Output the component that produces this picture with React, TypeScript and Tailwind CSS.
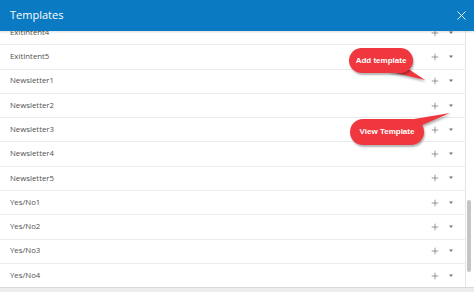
import { Plus, X } from "lucide-react";

const templates = [
  "ExitIntent4",
  "ExitIntent5",
  "Newsletter1",
  "Newsletter2",
  "Newsletter3",
  "Newsletter4",
  "Newsletter5",
  "Yes/No1",
  "Yes/No2",
  "Yes/No3",
  "Yes/No4",
];

function Caret() {
  return (
    <svg width="6" height="4" viewBox="0 0 6 4" className="text-[#777]">
      <path d="M1 0.5 L5 0.5 L3 3 Z" fill="currentColor" />
    </svg>
  );
}

// Red speech bubble used for the annotations
function Callout({ label, tail }: { label: string; tail: "down" | "up" }) {
  return (
    <div className="absolute" style={tail === "down" ? { left: 349, top: 48 } : { left: 350, top: 109 }}>
      <svg
        width="110"
        height="40"
        viewBox="0 0 110 40"
        className="absolute left-0 top-0 overflow-visible drop-shadow-[1px_2px_1px_rgba(0,0,0,0.3)]"
      >
        {tail === "down" ? (
          <path d="M38 23 L76 32 L58 20 Z" fill="#f0373d" />
        ) : (
          <path d="M52 12 L100 4 L70 17 Z" fill="#f0373d" />
        )}
      </svg>
      <div
        className={
          tail === "down"
            ? "relative flex h-[25px] w-[64px] items-center justify-center rounded-full bg-[#f0373d] text-[8px] font-bold text-white shadow-[1px_2px_2px_rgba(0,0,0,0.3)]"
            : "relative mt-[10px] flex h-[26px] w-[74px] items-center justify-center rounded-full bg-[#f0373d] text-[8px] font-bold text-white shadow-[1px_2px_2px_rgba(0,0,0,0.3)]"
        }
        style={{ fontFamily: '"Liberation Sans", Arial, sans-serif' }}
      >
        {label}
      </div>
    </div>
  );
}

export default function App() {
  return (
    <div
      className="relative flex h-[292px] w-[474px] flex-col overflow-hidden bg-white"
      style={{ fontFamily: '"Open Sans", "Noto Sans", sans-serif' }}
    >
      {/* Header */}
      <div className="z-10 flex h-[31px] shrink-0 items-center justify-between bg-[#0a7bc2] pl-[10px] pr-[5px] shadow-[0_1px_2px_rgba(0,0,0,0.15)]">
        <span className="text-[11px] text-white">Templates</span>
        <X size={15} strokeWidth={1.4} className="text-white" />
      </div>

      {/* List + scrollbar */}
      <div className="flex min-h-0 flex-1">
        <div className="min-w-0 flex-1 overflow-hidden">
          <div className="-mt-[10px]">
            {templates.map((name) => (
              <div
                key={name}
                className="flex h-[24.3px] items-center border-b border-[#ebebeb] pl-[10px] pr-[11px]"
              >
                <span className="flex-1 text-[7.8px] text-[#505050]">{name}</span>
                <Plus size={10} strokeWidth={1.4} className="mr-[8px] text-[#555]" />
                <Caret />
              </div>
            ))}
          </div>
        </div>
        <div className="w-[9px] shrink-0 border-l border-[#e6e6e6] bg-white pt-[169px]">
          <div className="ml-[1px] h-[72px] w-[4px] rounded-sm bg-[#c4c4c4]" />
        </div>
      </div>

      {/* Bottom edge */}
      <div className="h-[5px] shrink-0 border-t border-[#d8d8d8] bg-[#ededed]" />

      <Callout label="Add template" tail="down" />
      <Callout label="View Template" tail="up" />
    </div>
  );
}
